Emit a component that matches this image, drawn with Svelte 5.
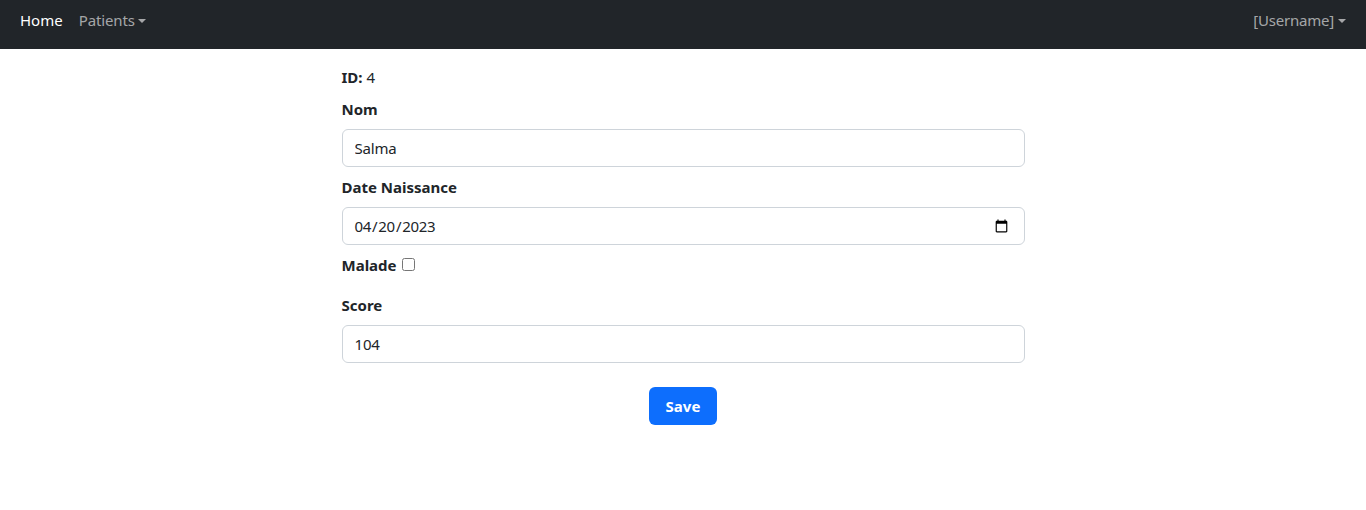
<script>
  let nom = $state('Salma');
  let date = $state('2023-04-20');
  let malade = $state(false);
  let score = $state(104);
</script>

<nav class="navbar">
  <ul class="links">
    <li><a class="link active" href="#home">Home</a></li>
    <li><a class="link caret patients" href="#patients">Patients</a></li>
  </ul>
  <a class="link caret user" href="#user">[Username]</a>
</nav>

<main class="page">
  <form class="form" onsubmit={(e) => e.preventDefault()}>
    <p class="id"><strong>ID:</strong> 4</p>
    <div class="group">
      <label for="nom">Nom</label>
      <input id="nom" class="control" type="text" bind:value={nom} />
    </div>
    <div class="group">
      <label for="date">Date Naissance</label>
      <input id="date" class="control date" type="date" bind:value={date} />
    </div>
    <div class="group check">
      <label for="malade">Malade</label>
      <input id="malade" type="checkbox" bind:checked={malade} />
    </div>
    <div class="group">
      <label for="score">Score</label>
      <input id="score" class="control" type="text" bind:value={score} />
    </div>
    <div class="actions">
      <button class="save" type="submit">Save</button>
    </div>
  </form>
</main>

<style>
  :global(body) {
    margin: 0;
    background: #fff;
    color: #212529;
    font-family: "Noto Sans", "Open Sans", sans-serif;
    font-size: 15px;
    line-height: 24px;
  }
  .navbar {
    display: flex;
    justify-content: space-between;
    align-items: flex-start;
    height: 49px;
    box-sizing: border-box;
    padding: 8px 20px 0;
    background: #212529;
  }
  .links {
    display: flex;
    gap: 16px;
    margin: 0;
    padding: 0;
    list-style: none;
  }
  .link {
    color: rgba(255, 255, 255, 0.6);
    text-decoration: none;
  }
  .link.active {
    color: #fff;
  }
  .patients {
    letter-spacing: -0.12px;
  }
  .user {
    letter-spacing: -0.2px;
  }
  .caret::after {
    content: "";
    display: inline-block;
    margin-left: 3px;
    vertical-align: 3px;
    border-top: 4.8px solid;
    border-left: 4.8px solid transparent;
    border-right: 4.8px solid transparent;
  }
  .user::after {
    margin-left: 4px;
  }
  .page {
    width: 683px;
    margin: 0 auto;
    padding-top: 16px;
  }
  .id {
    margin: 0 0 8px;
  }
  .group {
    margin-bottom: 8px;
  }
  label,
  strong {
    font-weight: 700;
  }
  .group > label {
    display: block;
    margin-bottom: 8px;
  }
  .check {
    display: flex;
    align-items: flex-start;
    gap: 5px;
    height: 32px;
  }
  .check input {
    width: 13px;
    height: 13px;
    margin: 5px 0 0 0;
  }
  .control {
    display: block;
    width: 100%;
    height: 38px;
    box-sizing: border-box;
    padding: 6px 12px;
    border: 1px solid #ced4da;
    border-radius: 6px;
    background: #fff;
    color: #212529;
    font: inherit;
    letter-spacing: -0.2px;
    outline: none;
  }
  .date {
    letter-spacing: -0.3px;
  }
  .date::-webkit-datetime-edit {
    margin-left: -1px;
  }
  .date::-webkit-calendar-picker-indicator {
    margin-right: 1px;
  }
  .actions {
    display: flex;
    justify-content: center;
    padding-top: 16px;
  }
  .save {
    width: 68px;
    height: 38px;
    border: 0;
    border-radius: 6px;
    background: #0d6efd;
    color: #fff;
    font: inherit;
    font-weight: 700;
  }
</style>
